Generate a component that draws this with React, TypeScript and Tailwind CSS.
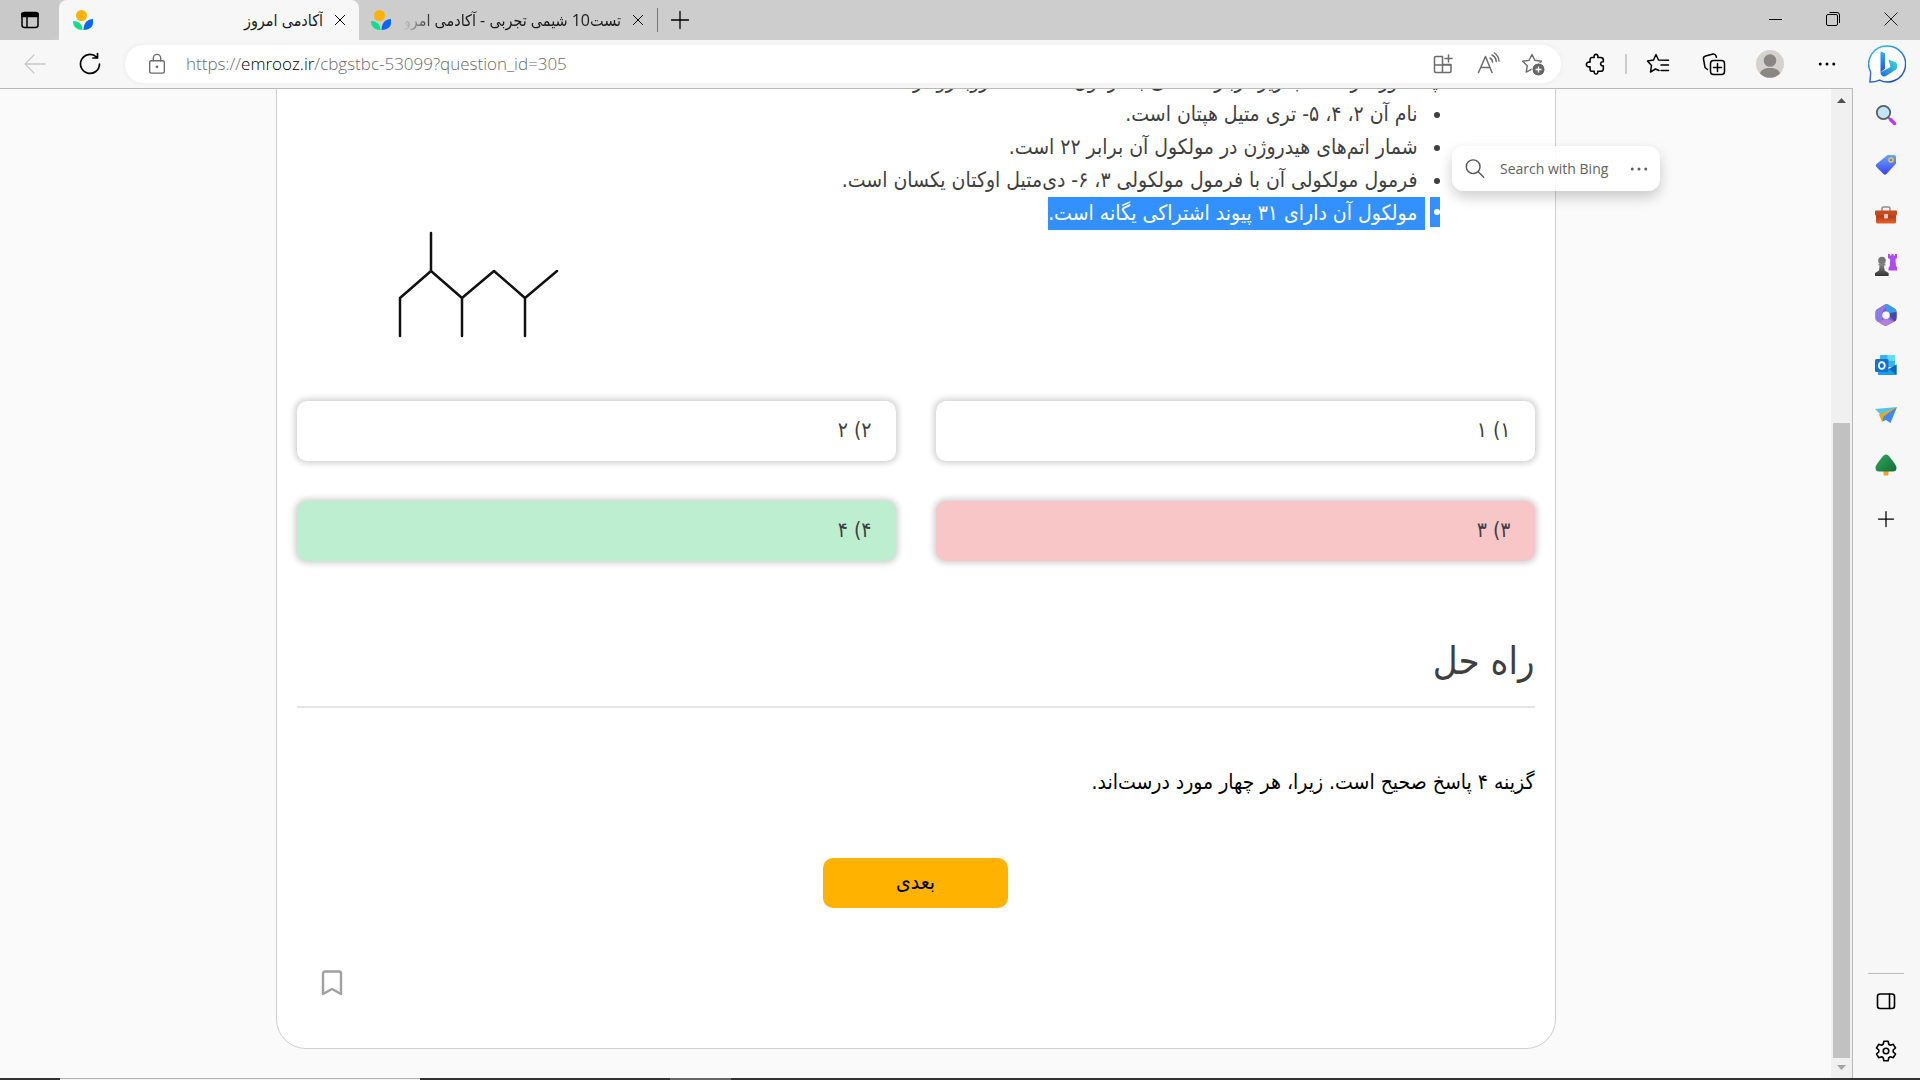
import type { ReactNode } from "react";

const pageFont = "font-['DejaVu_Sans_Condensed','DejaVu_Sans',sans-serif]";
const chromeFont = "font-['Open_Sans','DejaVu_Sans_Condensed','DejaVu_Sans',sans-serif]";

type Tab = { id: string; title: string; active: boolean };

const tabs: Tab[] = [
  { id: "home", title: "آکادمی امروز", active: true },
  { id: "test", title: "تست10 شیمی تجربی - آکادمی امروز", active: false },
];

const statements = [
  "نام آن ۲، ۴، ۵- تری متیل هپتان است.",
  "شمار اتم‌های هیدروژن در مولکول آن برابر ۲۲ است.",
  "فرمول مولکولی آن با فرمول مولکولی ۳، ۶- دی‌متیل اوکتان یکسان است.",
];

const options = [
  { id: "1", label: "۱) ۱", style: "bg-white" },
  { id: "2", label: "۲) ۲", style: "bg-white" },
  { id: "3", label: "۳) ۳", style: "bg-[#f8c6c6]" },
  { id: "4", label: "۴) ۴", style: "bg-[#bdeed0]" },
];

function Line({ children, size = 24, width = 1.5, className = "" }: { children: ReactNode; size?: number; width?: number; className?: string }) {
  return (
    <svg width={size} height={size} viewBox="0 0 24 24" fill="none" stroke="currentColor" strokeWidth={width} strokeLinecap="round" strokeLinejoin="round" className={className} aria-hidden="true">
      {children}
    </svg>
  );
}

function Favicon() {
  return (
    <svg width="20" height="20" viewBox="0 0 20 20" className="shrink-0" aria-hidden="true">
      <ellipse cx="8.5" cy="5.5" rx="5.5" ry="5.5" fill="#ffb200" />
      <path d="M0 11c5 0 9.500 3 9.500 9C4 20 0 17 0 11Z" fill="#0be08a" />
      <path d="M20 9v4c0 4-4 7-9.500 7 0-6 3-11 9.500-11Z" fill="#0868f5" />
    </svg>
  );
}

function TabItem({ tab }: { tab: Tab }) {
  return (
    <div className={`flex items-center h-10 w-[300px] pl-3.5 pr-2.5 ${tab.active ? "bg-[#f7f7f7] rounded-t-lg" : "-ml-0.5"}`}>
      <Favicon />
      <span
        dir="rtl"
        className={`flex-1 ml-3 mr-2 overflow-hidden whitespace-nowrap text-base leading-6 text-[#1b1b1b] ${tab.active ? "" : "[mask-image:linear-gradient(to_right,transparent,black_32px)]"}`}
      >
        {tab.title}
      </span>
      <button aria-label="Close tab" className="flex items-center justify-center size-[18px] text-black">
        <Line size={16}><path d="m5 5 14 14M19 5 5 19" /></Line>
      </button>
    </div>
  );
}

function TitleBar() {
  return (
    <header className="flex h-10 shrink-0 bg-[#cdcdcd]">
      <button aria-label="Tab actions" className="flex items-center justify-center w-[59px] h-10 rounded-br-lg bg-[#c9c9c9]">
        <svg width="18" height="18" viewBox="0 0 18 18" fill="none" stroke="#000" strokeWidth="1.500" aria-hidden="true">
          <rect x="1" y="1.500" width="16" height="15" rx="2.500" />
          <path d="M1 2.500h16v3H1z" fill="#000" />
          <path d="M6 6v10" />
        </svg>
      </button>
      {tabs.map((t) => <TabItem key={t.id} tab={t} />)}
      <div className="flex items-center">
        <span className="w-px h-6 bg-[#777]" />
        <button aria-label="New tab" className="flex items-center justify-center w-11 h-10">
          <Line size={24} width={1.3}><path d="M12 3.500v17M3.500 12h17" /></Line>
        </button>
      </div>
      <div className="flex ml-auto">
        <button aria-label="Minimize" className="flex items-center justify-center w-[58px] h-[38px]">
          <svg width="13" height="13" viewBox="0 0 13 13" stroke="#000" aria-hidden="true"><path d="M0 6.500h13" /></svg>
        </button>
        <button aria-label="Restore" className="flex items-center justify-center w-[58px] h-[38px]">
          <svg width="14" height="14" viewBox="0 0 14 14" fill="none" stroke="#000" aria-hidden="true">
            <rect x="0.500" y="2.500" width="11" height="11" rx="1.500" />
            <path d="M3.500.5H11A2.500 2.500 0 0 1 13.500 3v8" />
          </svg>
        </button>
        <button aria-label="Close" className="flex items-center justify-center w-[58px] h-[38px]">
          <svg width="14" height="14" viewBox="0 0 14 14" stroke="#222" aria-hidden="true"><path d="m.5.5 13 13M13.500.5l-13 13" /></svg>
        </button>
      </div>
    </header>
  );
}

function BingIcon() {
  return (
    <svg width="38" height="38" viewBox="0 0 38 38" fill="none" aria-hidden="true">
      <defs>
        <linearGradient id="bubble" x1="0" y1="0" x2=".6" y2="1">
          <stop offset="0" stopColor="#1fd0ee" />
          <stop offset=".5" stopColor="#2f7fe8" />
          <stop offset="1" stopColor="#1c4fd0" />
        </linearGradient>
        <linearGradient id="b1" x1="0" y1="0" x2="0" y2="1">
          <stop offset="0" stopColor="#2ab4ff" />
          <stop offset="1" stopColor="#1d50e0" />
        </linearGradient>
        <linearGradient id="b2" x1="0" y1="1" x2="1" y2="0">
          <stop offset="0" stopColor="#1d6be8" />
          <stop offset="1" stopColor="#3be0c8" />
        </linearGradient>
      </defs>
      <path d="M19.500 1a18 18 0 1 1-8 34.100c-3 1.300-6 1.900-9.500 1.900 0-3 .8-6.500.6-10A18 18 0 0 1 19.500 1Z" fill="#fff" stroke="url(#bubble)" strokeWidth="1.500" />
      <path d="M12.500 6.500 17 8.300v15.500l-4.500 3.700z" fill="url(#b1)" />
      <path d="M20.500 14.500 27 17c2.800 1.400 3 5 1 7.500L18 31c-3 1.500-5.500-.5-5.500-3.500l10-5.500z" fill="url(#b2)" />
    </svg>
  );
}

function IconButton({ label, children, className = "w-[45px]" }: { label: string; children: ReactNode; className?: string }) {
  return (
    <button aria-label={label} className={`flex items-center justify-center h-[38px] shrink-0 ${className}`}>
      {children}
    </button>
  );
}

function Toolbar() {
  return (
    <div className="flex items-center h-12 shrink-0 bg-[#f7f7f7] pl-3">
      <IconButton label="Back">
        <Line width={1.3} className="text-[#c8c8c8]"><path d="M22 12H2.500M11 3l-9 9 9 9" /></Line>
      </IconButton>
      <IconButton label="Refresh" className="w-[66px] mr-0.5">
        <Line width={1.7}><path d="M21.500 12a9.500 9.500 0 1 1-3-7M19.500 1.500V6H15" /></Line>
      </IconButton>
      <div className="flex flex-1 items-center h-[38px] rounded-full bg-white pl-[21px] pr-1.5 text-[#6b6b6b] shadow-[0_0_6px_rgba(0,0,0,0.05)]">
        <Line size={22}><rect x="4" y="8.500" width="16" height="13.500" rx="2" /><path d="M8 8.500V5.500a4 4 0 0 1 8 0v3" /><circle cx="12" cy="15" r=".7" fill="currentColor" /></Line>
        <p className="flex-1 ml-[18px] text-[17px] leading-6 font-light whitespace-nowrap">
          https://<span className="text-black">emrooz.ir</span>/cbgstbc-53099?question_id=305
        </p>
        <IconButton label="App available">
          <Line><path d="M11 4.500H5A1.500 1.500 0 0 0 3.500 6v13A1.500 1.500 0 0 0 5 20.500h13.500A1.500 1.500 0 0 0 20 19v-6H3.500M11.500 4.500v16M20 12.500h-8.500M17.500 3v7M14 6.500h7" /></Line>
        </IconButton>
        <IconButton label="Read aloud">
          <Line><path d="m2.500 20.500 7-16 6.500 16M4.700 15.500h9.500M14 6c1.500.8 2.500 2.300 2.700 4M16 3c2.500 1.300 4 3.800 4.300 6.500M18.500 1c2.700 1.800 4.300 5 4.500 8" /></Line>
        </IconButton>
        <IconButton label="Add to favorites">
          <svg width="24" height="24" viewBox="0 0 24 24" fill="none" stroke="currentColor" strokeWidth="1.400" strokeLinejoin="round" aria-hidden="true">
            <path d="m11 2.500 2.800 5.800 6.700 1-4.700 4.500 1 6-5.800-2.700-5.800 3 1.100-6.300-4.700-4.500 6.500-1z" />
            <circle cx="17.500" cy="17.500" r="6.500" fill="#666" stroke="#fff" strokeWidth="1" />
            <path d="M17.500 14.500v6M14.500 17.500h6" stroke="#fff" />
          </svg>
        </IconButton>
      </div>
      <IconButton label="Extensions" className="w-[70px]">
        <Line size={22} width={1.7}><path d="M5.500 7.500c0-1.500.8-2.500 2-2.500H10c-.5-2.500.5-3.500 2-3.500s2.500 1 2 3.500h3c2 0 3 1 3 2.500v2c-4-.5-4 5 0 4.500v3.500c0 1.500-1 2.500-3 2.500h-3c.3 2-.8 3-2 3s-2.300-1-2-3H7.500c-1.200 0-2-1-2-2.500V15c-2.500.5-4-.8-4-2.500s1.500-3 4-2.500z" /></Line>
      </IconButton>
      <span className="w-0.5 h-5 -ml-1.5 bg-[#ccc]" />
      <IconButton label="Favorites" className="w-[62px]">
        <Line><path d="M13 18.500 9.500 17l-5 3 1-6.500L1.500 9 7.500 8 10 2.500 12.500 8l10 .2M15 13h7.500M15 18.500h7.500" /></Line>
      </IconButton>
      <IconButton label="Collections" className="w-[49px]">
        <Line><rect x="8.500" y="8.500" width="14" height="14" rx="3" /><path d="M15.500 11.500v8M11.500 15.500h8M5.500 17.500 3 15.500 1.500 7c-.3-1.500.5-2.500 2-3l7.500-2c1.500-.3 2.500.3 3 2l.4 1.300" /></Line>
      </IconButton>
      <IconButton label="Profile" className="w-[63px]">
        <svg width="28" height="28" viewBox="0 0 28 28" aria-hidden="true">
          <circle cx="14" cy="14" r="14" fill="#d4d2cf" />
          <circle cx="14" cy="10.500" r="6.300" fill="#8a8683" />
          <path d="M4 23.500c1-4 5-5.500 10-5.500s9 1.500 10 5.500A14 14 0 0 1 4 23.500Z" fill="#8a8683" />
        </svg>
      </IconButton>
      <IconButton label="Settings and more" className="w-[52px]">
        <Line size={18}><g fill="currentColor" stroke="none"><circle cx="3" cy="12" r="2" /><circle cx="12" cy="12" r="2" /><circle cx="21" cy="12" r="2" /></g></Line>
      </IconButton>
      <IconButton label="Bing" className="w-[67px]"><BingIcon /></IconButton>
    </div>
  );
}

const sideIcons: { label: string; icon: ReactNode }[] = [
  {
    label: "Search",
    icon: (
      <>
        <path d="m13.500 13.500 3 3" stroke="#777" strokeWidth="2" />
        <path d="m15.500 15.500 4 4" stroke="#c136f5" strokeWidth="3.500" strokeLinecap="round" />
        <circle cx="8.500" cy="8.500" r="6.700" fill="#c2e4fb" stroke="#5c5c5c" strokeWidth="1.800" />
      </>
    ),
  },
  {
    label: "Shopping",
    icon: (
      <>
        <path d="M12.500 1H19a2 2 0 0 1 2 2v6.500L11.500 20c-1 1-2 1-3 0L1.500 13c-1-1-1-2 0-3z" fill="url(#tag)" />
        <circle cx="16" cy="6" r="2" fill="#5a77f8" stroke="#f3cf2b" strokeWidth="1.500" />
      </>
    ),
  },
  {
    label: "Tools",
    icon: (
      <>
        <path d="M7 7V4.500C7 3 7.500 3 8.500 3h5C15 3 15 3.500 15 4.500V7" fill="none" stroke="#8e8e8e" strokeWidth="1.500" />
        <rect x="1" y="10" width="20" height="9.500" rx="1.500" fill="url(#box)" />
        <rect x="0" y="6.500" width="22" height="5" rx="1" fill="#c7491c" />
        <rect x="9" y="10" width="4" height="4.500" rx="1" fill="#d0d0d0" />
      </>
    ),
  },
  {
    label: "Games",
    icon: (
      <>
        <path d="M13 0h2v1.500h1.500V0h2v1.500H20V0h2v4l-1.500 1.500.5 6.500 1.500 2v2.500h-9V14l1.300-2 .4-6.500L13 4z" fill="#b548f5" />
        <circle cx="7" cy="6.500" r="3.800" fill="#777" />
        <path d="M3.500 9.500h7v2H9l.6 5 4 2.500v3H0v-3l4-2.500.6-5H3.500z" fill="url(#pawn)" />
      </>
    ),
  },
  {
    label: "Microsoft 365",
    icon: (
      <>
        <path d="M10 .5c1-.5 2-.5 3 0L19.500 4.500c1.500 1 2 2 2 3.500v6c0 1.500-.5 2.500-2 3.500l-7.500 4c-1 .5-2 .5-3 0l-6.500-4C1 16.500.5 15.500.5 14V8.500C.5 7 1 6 2.500 5z" fill="#7668cf" />
        <path d="M10 .5c1-.5 2-.5 3 0L19.500 4.500c1.500 1 2 2 2 3.500v5L11 8V4c0-1.500-1-2-1-3.500Z" fill="#3b9be6" />
        <path d="M21.500 8v6c0 1.500-.5 2.500-2 3.500l-5-5.500V9z" fill="#4c46a5" />
        <path d="M19.500 17.500 12 21.500c-1 .5-2 .5-3 0l-6.500-4C6 17.500 8 15 11 14.500c3 0 5 3 8.500 3z" fill="#b27ddd" />
        <path d="M.5 8.500C.5 7 1 6 2.500 5L10 .5C12 4 7 6 7 9v6c-1.500 2-4 2.500-5 2C1 16 .5 15.500.5 14z" fill="#8c7be0" />
        <circle cx="11" cy="11.200" r="3.800" fill="#f7f7f7" />
      </>
    ),
  },
  {
    label: "Outlook",
    icon: (
      <>
        <rect x="5" y="1" width="15" height="12" rx="1" fill="#35b4ee" />
        <path d="M12.500 1H20v6h-7.500z" fill="#5fdcff" />
        <path d="M3 10.500 12 16l9.500-5.500V20a1 1 0 0 1-1 1H4a1 1 0 0 1-1-1z" fill="#1a9ce8" />
        <path d="M21.500 10.500V21L14 15z" fill="#1066b5" />
        <rect x="0" y="5" width="13.500" height="13" rx="1.500" fill="#1172cf" />
        <ellipse cx="6.800" cy="11.500" rx="3" ry="3.400" fill="none" stroke="#fff" strokeWidth="1.800" />
      </>
    ),
  },
  {
    label: "Drop",
    icon: (
      <>
        <path d="M0 5 22 3 6 11z" fill="#4ec3f5" />
        <path d="M22 3 4 10.500 7 18l4-5z" fill="#f0a41e" />
        <path d="M22 3 8.500 12.500 7.500 17.500 11 16l4.500 3z" fill="#3b8bf2" />
      </>
    ),
  },
  {
    label: "Trees",
    icon: (
      <>
        <rect x="8.500" y="16" width="5" height="5.500" rx="1" fill="#f59f1b" />
        <path d="M11 .5c-1.500 0-3 1.500-4.500 3.500C4 7.500.5 11 .5 14c0 2.500 1.500 3.500 3.500 3.500h14c2 0 3.500-1 3.500-3.500 0-3-3.500-6.500-6-10C14 2 12.500.5 11 .5Z" fill="url(#tree)" />
      </>
    ),
  },
];

function Sidebar() {
  return (
    <aside className="flex flex-col items-center w-[67px] shrink-0 bg-[#f7f7f7] pt-0.5 pr-0.5 pb-0.5">
      <svg width="0" height="0" className="absolute" aria-hidden="true">
        <defs>
          <linearGradient id="tag" x1="0" y1="0" x2="0" y2="1"><stop stopColor="#6aa4ff" /><stop offset="1" stopColor="#3b44f2" /></linearGradient>
          <linearGradient id="box" x1="0" y1="0" x2="0" y2="1"><stop stopColor="#a8330f" /><stop offset="1" stopColor="#e85f28" /></linearGradient>
          <linearGradient id="pawn" x1="0" y1="0" x2="0" y2="1"><stop stopColor="#8a8a8a" /><stop offset="1" stopColor="#333" /></linearGradient>
          <linearGradient id="tree" x1="0" y1="0" x2="1" y2="1"><stop stopColor="#2fa65a" /><stop offset="1" stopColor="#156f35" /></linearGradient>
        </defs>
      </svg>
      {sideIcons.map((s) => (
        <button key={s.label} aria-label={s.label} className="flex items-center justify-center size-[50px]">
          <svg width="22" height="22" viewBox="0 0 22 22" aria-hidden="true">{s.icon}</svg>
        </button>
      ))}
      <button aria-label="Customize" className="flex items-center justify-center size-[50px] mt-1">
        <Line size={20}><path d="M12 3v18M3 12h18" /></Line>
      </button>
      <span className="mt-auto w-9 h-px bg-[#bbb]" />
      <button aria-label="Hide sidebar" className="flex items-center justify-center size-[50px] mt-0.5">
        <Line size={24} width={1.6}><rect x="3.500" y="5" width="17" height="14.500" rx="2.500" /><path d="M15.500 5v14.500" /></Line>
      </button>
      <button aria-label="Settings" className="flex items-center justify-center size-[50px]">
        <Line size={24} width={1.6}>
          <path d="M9.900 2.300h4.200l.7 3 1.500.9 3-.9 2.200 3.700-2.300 2v1.900l2.300 2.100-2.200 3.700-3-.9-1.500.9-.7 3H9.900l-.7-3-1.500-.9-3 .9L2.500 15l2.300-2.100V11L2.500 9l2.200-3.700 3 .9 1.500-.9z" />
          <circle cx="12" cy="12" r="2.800" />
        </Line>
      </button>
    </aside>
  );
}

function Scrollbar() {
  return (
    <div className="flex flex-col items-center w-[22px] shrink-0 bg-[#f0f0f0] border-r border-[#b9b9b9]">
      <svg width="9" height="5" viewBox="0 0 9 5" className="mt-[9px]" aria-hidden="true"><path d="M0 5 4.500 0 9 5z" fill="#505050" /></svg>
      <div className="grow-[320]" />
      <div className="grow-[635] w-[17px] bg-[#c1c1c1]" />
      <svg width="9" height="5" viewBox="0 0 9 5" className="mt-[7px] mb-2" aria-hidden="true"><path d="m0 0 4.500 5L9 0z" fill="#a3a3a3" /></svg>
    </div>
  );
}

function Molecule() {
  return (
    <svg width="164" height="112" viewBox="0 0 164 112" fill="none" stroke="#111" strokeWidth="2.500" strokeLinecap="round" strokeLinejoin="round" role="img" aria-label="2,4,5-trimethylheptane">
      <path d="M2 106V68L33 41 64 68 96 41 127 68 159 41M33 41V3M64 68v38M127 68v38" />
    </svg>
  );
}

function QuestionCard() {
  return (
    <main dir="rtl" className={`w-[1280px] max-w-full px-5 bg-white border border-[#cfcfcf] rounded-b-[30px] text-[21px] text-[#3f3f3f] ${pageFont}`}>
      <p className="pr-[93px] leading-[33px]">چند مورد از مطالب زیر دربارهٔ آلکانی با فرمول داده شده روبه‌رو درست است؟</p>
      <ul className="pr-[95px] leading-[33px]">
        {statements.map((s) => (
          <li key={s} className="flex items-center gap-4">
            <span className="size-1.5 rounded-full bg-[#3f3f3f]" />
            {s}
          </li>
        ))}
        <li className="flex items-start gap-[5px] text-white">
          <span className="flex items-center h-[30px] w-2.5 bg-[#3390ff]"><span className="size-1.5 rounded-full bg-white" /></span>
          <span className="bg-[#3390ff] pr-[7px]">مولکول آن دارای ۳۱ پیوند اشتراکی یگانه است.</span>
        </li>
      </ul>
      <div className="flex justify-end pl-[101px]"><Molecule /></div>

      <div className="grid grid-cols-2 gap-10 mt-[59px]">
        {options.map((o) => (
          <button key={o.id} className={`h-[60px] px-6 rounded-[10px] text-right shadow-[0_0_6px_2px_rgba(0,0,0,0.2)] ${o.style}`}>
            {o.label}
          </button>
        ))}
      </div>

      <h2 className="mt-[75px] pb-5 border-b-2 border-[#e5e5e9] text-[38px] leading-[50px]">راه حل</h2>
      <p className="mt-[58px] leading-8 text-black">گزینه ۴ پاسخ صحیح است. زیرا، هر چهار مورد درست‌اند.</p>

      <div className="flex justify-center mt-[60px]">
        <button className="w-[185px] h-[50px] rounded-[10px] bg-[#ffb200] text-black">بعدی</button>
      </div>
      <div className="flex justify-end mt-[59px] mb-[49px] pl-[19px]">
        <button aria-label="Bookmark" className="flex items-center justify-center size-8 text-[#a0a0a0]">
          <svg width="22" height="26" viewBox="0 0 22 26" fill="none" stroke="currentColor" strokeWidth="2.400" strokeLinejoin="round" aria-hidden="true">
            <path d="M2 24V3.500A2 2 0 0 1 4 1.500h14a2 2 0 0 1 2 2V24l-9-5z" />
          </svg>
        </button>
      </div>
    </main>
  );
}

function SelectionMenu() {
  return (
    <div className="absolute top-[57px] right-[193px] flex items-center h-[45px] w-[208px] px-3 rounded-xl bg-white/90 text-sm text-[#616161] shadow-[0_6px_14px_rgba(0,0,0,0.2)]">
      <button className="flex items-center gap-3.5 whitespace-nowrap">
        <Line size={22} className="text-[#555]"><circle cx="10" cy="9.500" r="7.500" /><path d="m15.500 15 6 6" /></Line>
        Search with Bing
      </button>
      <button aria-label="More actions" className="ml-auto">
        <Line size={18}><g fill="currentColor" stroke="none"><circle cx="3" cy="12" r="2" /><circle cx="12" cy="12" r="2" /><circle cx="21" cy="12" r="2" /></g></Line>
      </button>
    </div>
  );
}

export default function App() {
  return (
    <div className={`flex flex-col h-screen overflow-hidden bg-[#fafafa] ${chromeFont}`}>
      <TitleBar />
      <Toolbar />
      <div className="flex flex-1 min-h-0">
        <div className="relative flex flex-1 min-w-0 border-t border-[#b9b9b9]">
          {/* page is scrolled to its end */}
          <div className="flex flex-1 flex-col items-center justify-end overflow-hidden pb-[29px]">
            <QuestionCard />
          </div>
          <Scrollbar />
          <SelectionMenu />
        </div>
        <Sidebar />
      </div>
      {/* top edge of the taskbar */}
      <div className="flex h-0.5 shrink-0 bg-[#333]">
        <span className="w-[360px] ml-[60px] bg-[#f3f3f3] border-t border-[#b0b0b0]" />
        <span className="w-[61px] ml-[250px] bg-[#666]" />
      </div>
    </div>
  );
}
